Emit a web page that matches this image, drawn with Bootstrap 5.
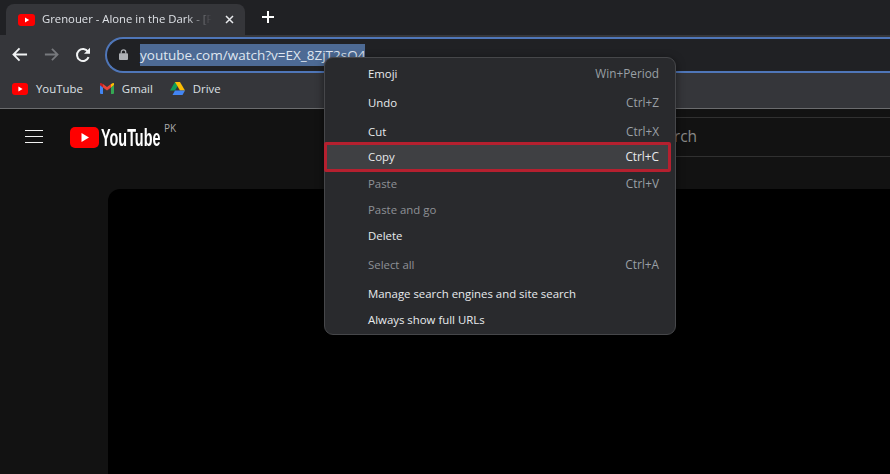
<!DOCTYPE html>
<html lang="en">
<head>
  <meta charset="UTF-8" />
  <title>Grenouer - Alone in the Dark - YouTube</title>
  <link href="https://cdn.jsdelivr.net/npm/bootstrap@5.3.0/dist/css/bootstrap.min.css" rel="stylesheet" />
  <style>
    body { width: 890px; height: 474px; overflow: hidden; background: #121212; font-family: "Open Sans", "Noto Sans", sans-serif; color: #e8eaed; position: relative; }
    .tabstrip { height: 35px; background: #202124; padding: 4px 0 0 6px; }
    .tab-item { width: 239px; height: 31px; background: #35363a; border-radius: 8px 8px 0 0; padding: 0 11px 0 12px; font-size: 11.3px; }
    .tab-name { width: 175px; margin-left: 7px; white-space: nowrap; overflow: hidden; color: #dee1e6; -webkit-mask-image: linear-gradient(to right, #000 82%, transparent 97%); mask-image: linear-gradient(to right, #000 82%, transparent 97%); }
    .tab-plus { margin: 7px 0 0 17px; }
    .toolbar { height: 39px; background: #35363a; padding-left: 12px; }
    .urlbar { margin-left: 14px; flex: 1; height: 36px; background: #202124; border: 2px solid #4f76b8; border-right: 0; border-radius: 18px 0 0 18px; padding-left: 12px; font-size: 13.5px; }
    .url-text { margin-left: 12px; background: #4d6a94; color: #dfe6f0; line-height: 22px; white-space: nowrap; height: 22px; }
    .bookmarks { height: 35px; background: #35363a; border-bottom: 1px solid #6b6c6e; padding: 0 0 4px 12px; font-size: 11.4px; color: #dee1e6; }
    .bm-item { margin-right: 17px; }
    .bm-item svg { margin-right: 8px; }
    .masthead { height: 80px; background: #121212; padding: 8px 0 0 25px; }
    .menu-bars { width: 18px; height: 13px; border-top: 1px solid #f1f1f1; border-bottom: 1px solid #f1f1f1; margin-top: 13px; position: relative; flex-shrink: 0; }
    .menu-bars::after { content: ""; position: absolute; left: 0; right: 0; top: 5px; border-top: 1px solid #f1f1f1; }
    .yt-logo { margin: 10px 0 0 27px; height: 21px; }
    .yt-word { font-family: "Liberation Sans", sans-serif; font-size: 24px; line-height: 21px; font-weight: 700; color: #fff; transform: scaleX(.6); transform-origin: left; margin-left: 2px; width: 59px; white-space: nowrap; }
    .yt-pk { font-size: 10px; line-height: 10px; color: #aaa; margin: -4px 0 0 4px; align-self: flex-start; }
    .search-field { width: 290px; height: 40px; border-top: 1px solid #303030; border-bottom: 1px solid #303030; font-size: 15.5px; color: #888; padding-left: 48px; line-height: 37px; white-space: nowrap; }
    .player-wrap { height: 285px; padding-left: 108px; }
    .player-box { background: #000; height: 100%; border-top-left-radius: 12px; }
    .ctx-menu { position: absolute; left: 324px; top: 57px; width: 352px; height: 278px; padding-top: 3px; background: #292a2d; border: 1px solid #46474a; border-radius: 9px; font-size: 11.4px; color: #e8eaed; box-shadow: 0 2px 8px rgba(0,0,0,.5); }
    .ctx-row { height: 26px; padding: 0 16px 0 43px; }
    .ctx-gap { margin-top: 3px; }
    .ctx-key { color: #9aa0a6; font-size: 11.8px; }
    .ctx-off { color: #8e9196; }
    .ctx-copy { position: relative; height: 30px; margin: -3px 4px -1px -1px; background: #3f4043; border: 3px solid #b5202f; border-radius: 2px; padding: 0 9px 0 41px; }
    .ctx-copy .ctx-key { color: #e8eaed; }
  </style>
</head>
<body>
  <div class="tabstrip d-flex align-items-start">
    <div class="tab-item d-flex align-items-center">
      <svg width="17" height="12" viewBox="0 0 17 12"><rect width="17" height="12" rx="3" fill="#f00"/><path d="M7 3.4v5.2L11.2 6z" fill="#fff"/></svg>
      <span class="tab-name">Grenouer - Alone in the Dark - [Full Album]</span>
      <svg class="ms-2" width="9" height="9" viewBox="0 0 9 9"><path d="M1 1l7 7M8 1L1 8" stroke="#e8eaed" stroke-width="1.5"/></svg>
    </div>
    <svg class="tab-plus" width="12" height="12" viewBox="0 0 12 12"><path d="M6 0v12M0 6h12" stroke="#fff" stroke-width="2"/></svg>
  </div>

  <div class="toolbar d-flex align-items-center">
    <svg width="16" height="15" viewBox="0 0 17 15"><path d="M16 7.5H2M8 1L1.600 7.500 8 14" fill="none" stroke="#f1f3f4" stroke-width="2"/></svg>
    <svg class="ms-3" width="15" height="15" viewBox="0 0 17 15"><path d="M1 7.500h14M9 1l6.400 6.500L9 14" fill="none" stroke="#77797d" stroke-width="2"/></svg>
    <svg class="ms-3" width="16" height="16" viewBox="0 0 16 16"><path d="M13.600 10.200A6 6 0 1 1 13 4.600" fill="none" stroke="#f1f3f4" stroke-width="2"/><path d="M15 .8v6H9z" fill="#f1f3f4"/></svg>
    <div class="urlbar d-flex align-items-center">
      <svg width="9" height="11" viewBox="0 0 10 12"><path d="M2.500 5V3.400a2.500 2.500 0 0 1 5 0V5" fill="none" stroke="#aeb1b5" stroke-width="1.4"/><rect y="4.600" width="10" height="7.400" rx="1" fill="#aeb1b5"/></svg>
      <span class="url-text">youtube.com/watch?v=EX_8ZjT2sO4</span>
    </div>
  </div>

  <div class="bookmarks d-flex align-items-center">
    <div class="bm-item d-flex align-items-center">
      <svg width="16" height="12" viewBox="0 0 16 12"><rect width="16" height="12" rx="3" fill="#f00"/><path d="M6.400 3.400v5.200L10.600 6z" fill="#fff"/></svg>YouTube
    </div>
    <div class="bm-item d-flex align-items-center">
      <svg width="14" height="11" viewBox="0 0 14 11"><path d="M0 2v8a1 1 0 0 0 1 1h2V4.500z" fill="#4285f4"/><path d="M14 2v8a1 1 0 0 1-1 1h-2V4.500z" fill="#34a853"/><path d="M0 2l3 2.500V1L1.800.4A1.100 1.100 0 0 0 0 2z" fill="#c5221f"/><path d="M3 1v3.500l4 3 4-3V1L7 4z" fill="#ea4335"/><path d="M14 2l-3 2.500V1l1.200-.6A1.100 1.100 0 0 1 14 2z" fill="#fbbc04"/></svg>Gmail
    </div>
    <div class="bm-item d-flex align-items-center">
      <svg width="15" height="13" viewBox="0 0 15 13"><path d="M5 0h5L5 8.600H0z" fill="#0f9d58"/><path d="M10 0l5 8.600h-5L5 0z" fill="#fbbc04"/><path d="M2.500 13L5 8.600h10L12.500 13z" fill="#4285f4"/></svg>Drive
    </div>
  </div>

  <div class="masthead d-flex align-items-start">
    <div class="menu-bars"></div>
    <div class="yt-logo d-flex align-items-center">
      <svg width="29" height="21" viewBox="0 0 29 21"><rect width="29" height="21" rx="5" fill="#f00"/><path d="M11.500 6v9l7.500-4.500z" fill="#fff"/></svg>
      <span class="yt-word">YouTube</span>
      <span class="yt-pk">PK</span>
    </div>
    <div class="search-field ms-auto">Search</div>
  </div>
  <div class="player-wrap"><div class="player-box"></div></div>

  <div class="ctx-menu">
    <div class="ctx-row d-flex justify-content-between align-items-center"><span>Emoji</span><span class="ctx-key">Win+Period</span></div>
    <div class="ctx-row ctx-gap d-flex justify-content-between align-items-center"><span>Undo</span><span class="ctx-key">Ctrl+Z</span></div>
    <div class="ctx-row ctx-gap d-flex justify-content-between align-items-center"><span>Cut</span><span class="ctx-key">Ctrl+X</span></div>
    <div class="ctx-row ctx-copy d-flex justify-content-between align-items-center"><span>Copy</span><span class="ctx-key">Ctrl+C</span></div>
    <div class="ctx-row ctx-off d-flex justify-content-between align-items-center"><span>Paste</span><span class="ctx-key">Ctrl+V</span></div>
    <div class="ctx-row ctx-off d-flex align-items-center"><span>Paste and go</span></div>
    <div class="ctx-row d-flex align-items-center"><span>Delete</span></div>
    <div class="ctx-row ctx-gap ctx-off d-flex justify-content-between align-items-center"><span>Select all</span><span class="ctx-key">Ctrl+A</span></div>
    <div class="ctx-row ctx-gap d-flex align-items-center"><span>Manage search engines and site search</span></div>
    <div class="ctx-row d-flex align-items-center"><span>Always show full URLs</span></div>
  </div>

  <script src="https://cdn.jsdelivr.net/npm/bootstrap@5.3.0/dist/js/bootstrap.bundle.min.js"></script>
</body>
</html>
